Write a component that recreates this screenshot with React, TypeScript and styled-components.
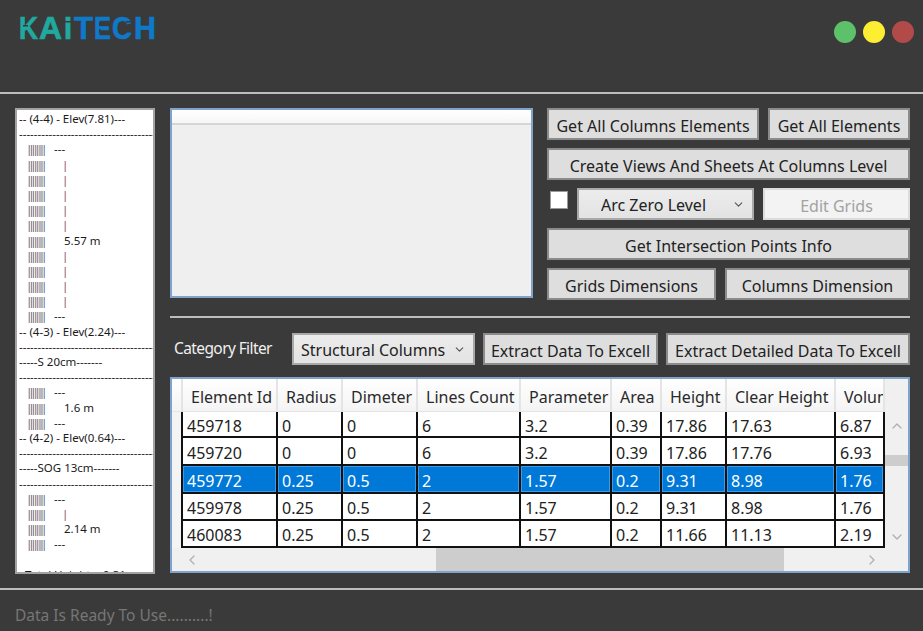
import React from 'react'
import styled, { createGlobalStyle } from 'styled-components'
import { ChevronDown, ChevronLeft, ChevronRight, ChevronUp } from 'lucide-react'

const GlobalStyle = createGlobalStyle`
	html, body {
		margin: 0;
		padding: 0;
		background: #3a3a3a;
	}
	* {
		box-sizing: border-box;
	}
`

const columnWidths = '11px 95px 65px 75px 103px 91px 50px 65px 109px 49px'

const headers = ['Element Id', 'Radius', 'Dimeter', 'Lines Count', 'Parameter', 'Area', 'Height', 'Clear Height', 'Volume']

const rows = [
	['459718', '0', '0', '6', '3.2', '0.39', '17.86', '17.63', '6.87'],
	['459720', '0', '0', '6', '3.2', '0.39', '17.86', '17.76', '6.93'],
	['459772', '0.25', '0.5', '2', '1.57', '0.2', '9.31', '8.98', '1.76'],
	['459978', '0.25', '0.5', '2', '1.57', '0.2', '9.31', '8.98', '1.76'],
	['460083', '0.25', '0.5', '2', '1.57', '0.2', '11.66', '11.13', '2.19']
]

const logoLetters = [
	{ char: 'K', x: 4, width: 19, fill: '#1fa99f' },
	{ char: 'A', x: 24, width: 23, fill: '#1fa99f' },
	{ char: 'I', x: 49, width: 8, fill: '#1fa99f' },
	{ char: 'T', x: 59, width: 19, fill: '#0f79c9' },
	{ char: 'E', x: 79, width: 17, fill: '#0f79c9' },
	{ char: 'C', x: 97, width: 20, fill: '#0f79c9' },
	{ char: 'H', x: 119, width: 22, fill: '#0f79c9' }
]

// stencil gaps that cut through the logo letters
const logoCuts = [
	{ x: 48, y: 12, width: 10, height: 1.5 },
	{ x: 60, y: 12, width: 6, height: 1.5 },
	{ x: 84, y: 13, width: 1.5, height: 4 },
	{ x: 84, y: 20, width: 1.5, height: 4 },
	{ x: 111, y: 12, width: 7, height: 1.5 },
	{ x: 111, y: 22, width: 7, height: 1.5 },
	{ x: 8, y: 16, width: 5, height: 1.5 }
]

type LevelLine =
	| { kind: 'text', text: string }
	| { kind: 'column', mark: string, indent?: boolean }

const longDash = '-'.repeat(60)
const tall: LevelLine[] = [
	{ kind: 'column', mark: '---' },
	...Array(5).fill({ kind: 'column', mark: '|', indent: true }),
	{ kind: 'column', mark: '5.57 m', indent: true },
	...Array(4).fill({ kind: 'column', mark: '|', indent: true }),
	{ kind: 'column', mark: '---' }
]

const levelLines: LevelLine[] = [
	{ kind: 'text', text: '-- (4-4) - Elev(7.81)---' },
	{ kind: 'text', text: longDash },
	...tall,
	{ kind: 'text', text: '-- (4-3) - Elev(2.24)---' },
	{ kind: 'text', text: longDash },
	{ kind: 'text', text: '-----S 20cm-------' },
	{ kind: 'text', text: longDash },
	{ kind: 'column', mark: '---' },
	{ kind: 'column', mark: '1.6 m', indent: true },
	{ kind: 'column', mark: '---' },
	{ kind: 'text', text: '-- (4-2) - Elev(0.64)---' },
	{ kind: 'text', text: longDash },
	{ kind: 'text', text: '-----SOG 13cm-------' },
	{ kind: 'text', text: longDash },
	{ kind: 'column', mark: '---' },
	{ kind: 'column', mark: '|', indent: true },
	{ kind: 'column', mark: '2.14 m', indent: true },
	{ kind: 'column', mark: '---' }
]

function App () {
	return (
		<Window>
			<GlobalStyle />
			<Header>
				<Logo width='142' height='34' viewBox='0 0 142 34'>
					{logoLetters.map(l => (
						<LogoText key={l.char} x={l.x} y='30' fill={l.fill} stroke={l.fill} textLength={l.width} lengthAdjust='spacingAndGlyphs'>
							{l.char}
						</LogoText>
					))}
					{logoCuts.map((c, i) => <rect key={i} {...c} fill='#3a3a3a' />)}
				</Logo>
				<WindowButtons>
					<WindowDot $color='#5cc169' />
					<WindowDot $color='#fdee33' />
					<WindowDot $color='#b34a4a' />
				</WindowButtons>
			</Header>
			<Rule />
			<Main>
				<LevelPanel>
					{levelLines.map((line, i) => line.kind === 'text'
						? <LevelText key={i}>{line.text}</LevelText>
						: (
							<LevelRow key={i}>
								<Bars>||||||||</Bars>
								<Mark $indent={line.indent} $thin={line.mark === '|'}>{line.mark}</Mark>
							</LevelRow>
						))}
					<LevelText />
					<TotalText>Total Height = 9.31 m</TotalText>
				</LevelPanel>
				<Content>
					<TopArea>
						<PreviewBox>
							<PreviewHead />
						</PreviewBox>
						<Actions>
							<ActionRow>
								<Button $width='212px'>Get All Columns Elements</Button>
								<Button>Get All Elements</Button>
							</ActionRow>
							<ActionRow>
								<Button>Create Views And Sheets At Columns Level</Button>
							</ActionRow>
							<ActionRow>
								<CheckBox />
								<Combo $width='177px' $center>
									<ComboText>Arc Zero Level</ComboText>
									<ChevronDown size={13} color='#555' />
								</Combo>
								<DisabledButton>Edit Grids</DisabledButton>
							</ActionRow>
							<ActionRow>
								<Button>Get Intersection Points Info</Button>
							</ActionRow>
							<ActionRow>
								<Button $width='169px'>Grids Dimensions</Button>
								<Button>Columns Dimension</Button>
							</ActionRow>
						</Actions>
					</TopArea>
					<Divider />
					<FilterBar>
						<FilterLabel>Category Filter</FilterLabel>
						<Combo $width='183px'>
							<ComboText>Structural Columns</ComboText>
							<ChevronDown size={13} color='#555' />
						</Combo>
						<Button $width='175px'>Extract Data To Excell</Button>
						<Button>Extract Detailed Data To Excell</Button>
					</FilterBar>
					<DataGrid>
						<HeadRow>
							<HeadCell />
							{headers.map(h => <HeadCell key={h}>{h}</HeadCell>)}
						</HeadRow>
						<HeadCorner />
						<Body>
							{rows.map((row, i) => (
								<Row key={row[0]} $selected={i === 2}>
									<Indicator />
									{row.map((value, c) => (
										<Cell key={c} $first={c === 0} $selected={i === 2}>
											<CellText $selected={i === 2}>{value}</CellText>
										</Cell>
									))}
								</Row>
							))}
						</Body>
						<VScroll>
							<ChevronUp size={16} color='#b0b0b0' />
							<VThumb />
							<ChevronDown size={16} color='#b0b0b0' />
						</VScroll>
						<HScroll>
							<ChevronLeft size={16} color='#b0b0b0' />
							<HThumb />
							<ChevronRight size={16} color='#b0b0b0' />
						</HScroll>
						<HeadCorner />
					</DataGrid>
				</Content>
			</Main>
			<Rule />
			<Status>Data Is Ready To Use..........!</Status>
		</Window>
	)
}

const Window = styled.div`
	width: 923px;
	height: 631px;
	overflow: hidden;
	background: #3a3a3a;
	font-family: "Noto Sans", "Open Sans", sans-serif;
	color: #222;
`
const Header = styled.header`
	height: 92px;
	padding: 9px 9px 0 15px;
	display: flex;
	justify-content: space-between;
	align-items: flex-start;
`
const Logo = styled.svg`
	display: block;
	background: #3a3a3a;
`
const LogoText = styled.text`
	font-family: "Liberation Sans", sans-serif;
	font-weight: 700;
	font-size: 32px;
	stroke-width: 0.7px;
`
const WindowButtons = styled.div`
	display: flex;
	gap: 7px;
	padding-top: 12px;
`
const WindowDot = styled.span<{ $color: string }>`
	width: 22px;
	height: 22px;
	border-radius: 50%;
	background: ${props => props.$color};
`
const Rule = styled.div`
	height: 2px;
	background: #bdbdbd;
`
const Main = styled.main`
	height: 494px;
	padding: 14px 13px 14px 15px;
	display: flex;
	gap: 15px;
`
const LevelPanel = styled.div`
	width: 140px;
	height: 466px;
	padding: 1px 0 0 2px;
	overflow: hidden;
	background: #fff;
	border: 2px solid #a3a3a3;
	font-size: 11.5px;
	line-height: 15.2px;
	color: #1a1a1a;
`
const LevelText = styled.div`
	height: 15.2px;
	white-space: nowrap;
	overflow: hidden;
`
const TotalText = styled(LevelText)`
	padding-left: 6px;
`
const LevelRow = styled.div`
	height: 15.2px;
	padding-left: 7px;
	display: flex;
	white-space: nowrap;
`
const Bars = styled.span`
	width: 28px;
	color: #5f5c6c;
	letter-spacing: -4.2px;
	overflow: hidden;
`
const Mark = styled.span<{ $indent?: boolean, $thin?: boolean }>`
	margin-left: ${props => props.$thin ? '8px' : props.$indent ? '10px' : '0'};
	color: ${props => props.$thin ? '#8c4a56' : '#1a1a1a'};
`
const Content = styled.div`
	width: 740px;
	display: flex;
	flex-direction: column;
`
const TopArea = styled.div`
	display: flex;
	gap: 14px;
	height: 193px;
`
const PreviewBox = styled.div`
	width: 363px;
	height: 190px;
	background: #efefef;
	border: 2px solid #7fa3cc;
`
const PreviewHead = styled.div`
	height: 15px;
	background: linear-gradient(#fff, #f6f6f6);
	border-bottom: 2px solid #d6d6d6;
`
const Actions = styled.div`
	width: 363px;
	display: flex;
	flex-direction: column;
	gap: 8px;
`
const ActionRow = styled.div`
	height: 32px;
	display: flex;
	align-items: center;
	gap: 9px;
`
const Button = styled.div<{ $width?: string }>`
	height: 32px;
	padding-top: 3px;
	flex: ${props => props.$width ? `0 0 ${props.$width}` : '1'};
	display: flex;
	align-items: center;
	justify-content: center;
	background: #dedede;
	border: 2px solid #8b8b8b;
	font-size: 16px;
	line-height: 20px;
	color: #222;
	white-space: nowrap;
`
const DisabledButton = styled(Button)`
	background: #f3f3f3;
	border-color: #dcdcdc;
	color: #a2a2a2;
`
const CheckBox = styled.span`
	width: 18px;
	height: 18px;
	margin: -8px 0 0 3px;
	background: #fff;
	border: 1px solid #9a9a9a;
`
const Combo = styled.div<{ $width: string, $center?: boolean }>`
	height: 32px;
	flex: 0 0 ${props => props.$width};
	padding: 1px 7px 0 ${props => props.$center ? '22px' : '7px'};
	display: flex;
	align-items: center;
	justify-content: space-between;
	background: linear-gradient(#ececec, #e3e3e3);
	border: 2px solid #a8a8a8;
	font-size: 16px;
	line-height: 20px;
	white-space: nowrap;
`
const ComboText = styled.span`
	overflow: hidden;
`
const Divider = styled.div`
	height: 2px;
	margin-top: 15px;
	background: #bdbdbd;
`
const FilterBar = styled.div`
	height: 32px;
	margin-top: 15px;
	display: flex;
	align-items: center;
	gap: 8px;
`
const FilterLabel = styled.span`
	width: 114px;
	margin-top: -2px;
	padding-left: 4px;
	flex-shrink: 0;
	font-size: 15.5px;
	letter-spacing: -0.6px;
	line-height: 20px;
	color: #f0f0f0;
	white-space: nowrap;
`
const DataGrid = styled.div`
	width: 740px;
	height: 196px;
	margin-top: 12px;
	display: grid;
	grid-template-columns: 713px 23px;
	grid-template-rows: 33px 136px 23px;
	background: #f0f0f0;
	border: 2px solid #7fa3cc;
`
const HeadRow = styled.div`
	display: grid;
	grid-template-columns: ${columnWidths};
	background: #fbfbfb;
`
const HeadCell = styled.div`
	padding: 3px 0 0 8px;
	display: flex;
	align-items: center;
	overflow: hidden;
	white-space: nowrap;
	background: linear-gradient(#fff, #f4f4f4);
	border-right: 2px solid #e4e4e4;
	border-bottom: 1px solid #e4e4e4;
	font-size: 16px;
	line-height: 20px;
	color: #2a2a2a;
`
const HeadCorner = styled.div`
	background: #f0f0f0;
`
const Body = styled.div`
	display: grid;
	grid-template-rows: 26px 28px 28px 27px 27px;
	background: #fff;
`
const Row = styled.div<{ $selected: boolean }>`
	display: grid;
	grid-template-columns: ${columnWidths};
	background: ${props => props.$selected ? '#0078d7' : '#fff'};
`
const Indicator = styled.div`
	background: #f4f4f4;
`
const Cell = styled.div<{ $first: boolean, $selected: boolean }>`
	display: flex;
	overflow: hidden;
	border-right: 2px solid #111;
	border-bottom: 2px solid #111;
	border-left: ${props => props.$first ? '2px solid #111' : '0'};
	margin-left: ${props => props.$first ? '-2px' : '0'};
`
const CellText = styled.span<{ $selected: boolean }>`
	flex: 1;
	padding: 3px 0 0 3px;
	display: flex;
	align-items: center;
	font-size: 16px;
	line-height: 18px;
	color: ${props => props.$selected ? '#fff' : '#222'};
	border: 1px solid ${props => props.$selected ? '#3f9ae8' : 'transparent'};
`
const VScroll = styled.div`
	position: relative;
	display: flex;
	flex-direction: column;
	align-items: center;
	justify-content: space-between;
	padding: 6px 0 3px;
	background: #f0f0f0;
`
const VThumb = styled.div`
	position: absolute;
	top: 43px;
	left: 0;
	width: 100%;
	height: 11px;
	background: #cdcdcd;
`
const HScroll = styled.div`
	position: relative;
	display: flex;
	align-items: center;
	justify-content: space-between;
	padding: 0 5px 0 12px;
	background: #f0f0f0;
`
const HThumb = styled.div`
	position: absolute;
	top: 0;
	left: 264px;
	width: 348px;
	height: 100%;
	background: #cdcdcd;
`
const Status = styled.footer`
	height: 41px;
	padding: 13px 0 0 15px;
	font-size: 15.5px;
	line-height: 24px;
	color: #767676;
`

export default App
